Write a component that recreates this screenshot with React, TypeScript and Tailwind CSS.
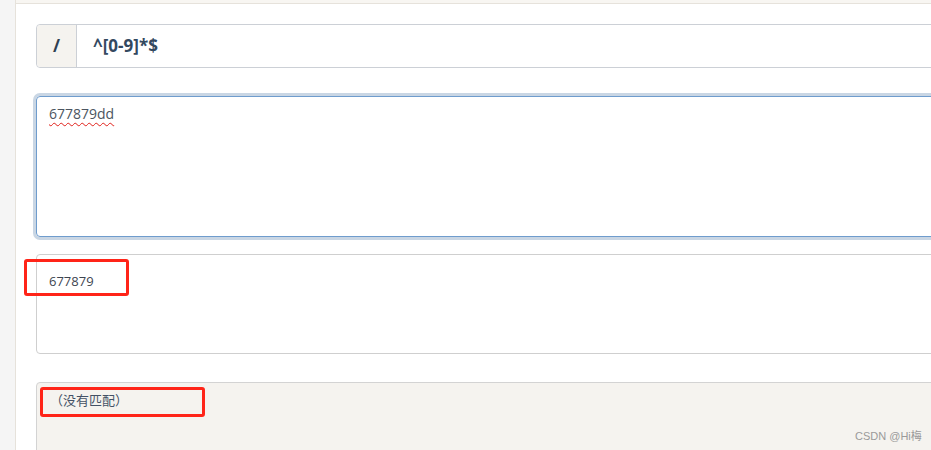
import React from "react";

export default function App() {
  return (
    <div
      className="relative flex h-[450px] w-[931px] overflow-hidden bg-white"
      style={{ fontFamily: '"Open Sans", "Noto Sans CJK SC", sans-serif' }}
    >
      <div className="w-[16px] shrink-0 border-r border-[#e6e2db] bg-[#f5f5f5]" />
      <div className="flex min-w-0 flex-1 flex-col">
        <div className="h-[4px] shrink-0 border-b border-[#e6e2db] bg-[#f8f6f2]" />
        <div className="flex w-[960px] flex-col pl-[20px] pt-[20px]">
          <div className="flex h-[44px] rounded-[4px] border border-[#ccd0d6]">
            <div className="flex w-[40px] items-center justify-center rounded-l-[4px] border-r border-[#ccd0d6] bg-[#f5f3ef] text-[17px] font-bold text-[#2f3f52]">
              /
            </div>
            <div className="flex items-center pl-[16px] text-[17px] font-bold text-[#33495f]">
              ^[0-9]*$
            </div>
          </div>

          <div className="mt-[28px] h-[141px] rounded-[4px] border border-[#6f9ccd] px-[12px] pt-[4px] shadow-[0_0_0_3px_#c9d6e4]">
            <span className="text-[14px] leading-[20px] text-[#4c5560] underline decoration-[#e0201a] decoration-wavy decoration-1 underline-offset-[3px]">
              677879dd
            </span>
          </div>

          <div className="mt-[17px] h-[100px] rounded-[4px] border border-[#cfcfcf] px-[12px] pt-[16px]">
            <div className="text-[13px] leading-[20px] text-[#3d4550]">677879</div>
          </div>

          <div className="mt-[28px] h-[80px] rounded-t-[4px] border border-[#d3d3d3] bg-[#f5f3ef] pl-[13px] pt-[7px]">
            <div
              className="text-[13px] leading-[20px] text-[#445266]"
              style={{ fontFamily: '"Noto Sans CJK SC", sans-serif' }}
            >
              （没有匹配）
            </div>
          </div>
        </div>
      </div>

      <div className="pointer-events-none absolute left-[24px] top-[259px] h-[37px] w-[105px] rounded-[3px] border-[3px] border-[#ff2418]" />
      <div className="pointer-events-none absolute left-[40px] top-[387px] h-[30px] w-[165px] rounded-[3px] border-[3px] border-[#ff2418]" />

      <div
        className="absolute left-[855px] top-[428px] text-[11px] leading-[16px] text-[#9a9a9a]"
        style={{ fontFamily: '"Liberation Sans", "Noto Sans CJK SC", sans-serif' }}
      >
        CSDN @Hi梅
      </div>
    </div>
  );
}
